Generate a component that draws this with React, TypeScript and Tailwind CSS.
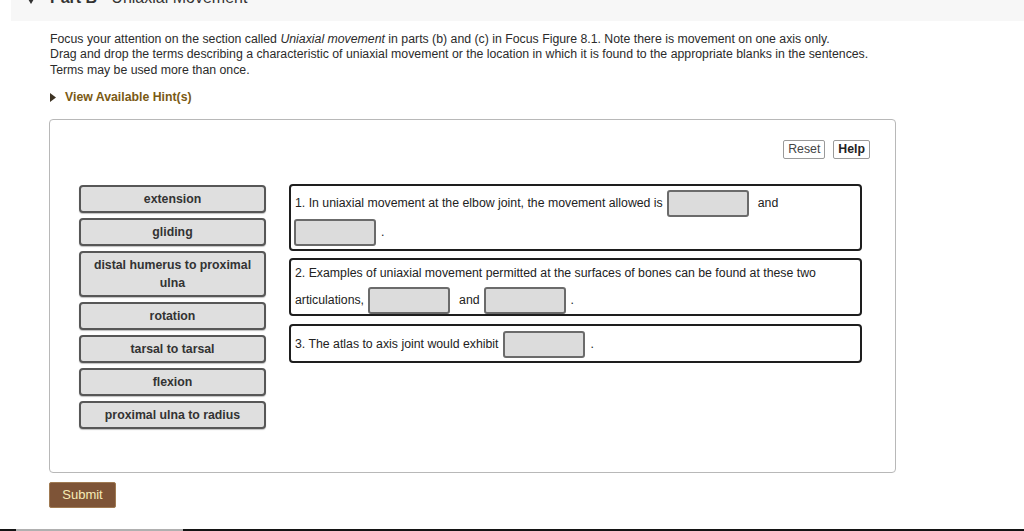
import React from "react";

const terms = [
  "extension",
  "gliding",
  "distal humerus to proximal ulna",
  "rotation",
  "tarsal to tarsal",
  "flexion",
  "proximal ulna to radius",
];

function Blank({ className = "" }: { className?: string }) {
  return (
    <span
      className={
        "inline-block h-[27px] w-[82px] shrink-0 rounded-[3px] border-2 border-[#6b6b6b] bg-[#dcdcdc] " +
        className
      }
    />
  );
}

export default function App() {
  return (
    <div className="flex h-[531px] w-[1024px] flex-col overflow-hidden bg-white font-['Liberation_Sans',Arial,sans-serif] text-[#2b2b2b]">
      {/* header strip */}
      <div className="ml-[11px] h-[21px] shrink-0 overflow-hidden bg-[#f7f7f7]">
        <div className="mt-[-12px] flex h-[20px] items-center pl-[17px]">
          <svg width="6" height="5" viewBox="0 0 6 5" className="mt-[7px]">
            <polygon points="0,0 6,0 3,5" fill="#333" />
          </svg>
          <span className="ml-[16px] text-[16px] leading-[20px] text-[#333]">
            <b>Part B - </b>Uniaxial Movement
          </span>
        </div>
      </div>

      {/* instructions */}
      <div className="ml-[50px] mt-[11px] text-[12.3px] leading-[15.3px] text-[#2b2b2b]">
        <p>
          Focus your attention on the section called <i>Uniaxial movement</i> in parts (b) and (c) in Focus Figure 8.1. Note
          there is movement on one axis only.
        </p>
        <p>
          Drag and drop the terms describing a characteristic of uniaxial movement or the location in which it is found to the
          appropriate blanks in the sentences.
        </p>
        <p>Terms may be used more than once.</p>
      </div>

      {/* hint */}
      <div className="ml-[50px] mt-[12px] flex h-[15px] items-center">
        <svg width="6" height="9" viewBox="0 0 6 9">
          <polygon points="0,0 6,4.5 0,9" fill="#3e3424" />
        </svg>
        <span className="ml-[9px] text-[12.3px] font-bold leading-[15px] text-[#7a5a14]">View Available Hint(s)</span>
      </div>

      {/* main box */}
      <div className="ml-[49px] mt-[14px] flex h-[354px] w-[847px] shrink-0 flex-col rounded-[4px] border border-[#b8b8b8] pl-[29px] pr-[25px] pt-[20px]">
        <div className="flex justify-end gap-[8px]">
          <button className="h-[19px] rounded-[2px] border border-[#9a9a9a] bg-white px-[4px] text-[12.3px] leading-[17px] text-[#444]">
            Reset
          </button>
          <button className="h-[19px] rounded-[2px] border border-[#9a9a9a] bg-white px-[4px] text-[12.3px] font-bold leading-[17px] text-[#222]">
            Help
          </button>
        </div>

        <div className="mt-[25px] flex items-start gap-[23px]">
          {/* terms */}
          <div className="mt-[1px] flex w-[187px] flex-col gap-[5px]">
            {terms.map((t) => (
              <div
                key={t}
                className="rounded-[4px] border-2 border-[#575757] bg-[#dfdfdf] px-[6px] py-[3px] text-center text-[12.3px] font-bold leading-[18px] text-[#333] shadow-[0_1px_1px_rgba(0,0,0,0.25)]"
              >
                {t}
              </div>
            ))}
          </div>

          {/* sentences */}
          <div className="flex w-[573px] flex-col text-[12.3px] text-[#222]">
            <div className="h-[67px] rounded-[4px] border-2 border-[#1e1e1e] px-[3px] pt-[4px]">
              <div className="flex h-[27px] items-center">
                <span className="ml-[1px]">1. In uniaxial movement at the elbow joint, the movement allowed is</span>
                <Blank className="ml-[4px]" />
                <span className="ml-[9px]">and</span>
              </div>
              <div className="mt-[2px] flex h-[27px] items-center">
                <Blank />
                <span className="ml-[5px]">.</span>
              </div>
            </div>

            <div className="mt-[7px] h-[58px] rounded-[4px] border-2 border-[#1e1e1e] px-[3px] pt-[4px]">
              <div className="flex h-[18px] items-center">
                <span className="ml-[1px]">
                  2. Examples of uniaxial movement permitted at the surfaces of bones can be found at these two
                </span>
              </div>
              <div className="mt-[5px] flex h-[27px] items-center">
                <span className="ml-[1px]">articulations,</span>
                <Blank className="ml-[4px]" />
                <span className="ml-[9px]">and</span>
                <Blank className="ml-[4px]" />
                <span className="ml-[5px]">.</span>
              </div>
            </div>

            <div className="mt-[8px] h-[39px] rounded-[4px] border-2 border-[#1e1e1e] px-[3px] pt-[5px]">
              <div className="flex h-[27px] items-center">
                <span className="ml-[1px]">3. The atlas to axis joint would exhibit</span>
                <Blank className="ml-[5px]" />
                <span className="ml-[5px]">.</span>
              </div>
            </div>
          </div>
        </div>
      </div>

      {/* submit */}
      <button className="ml-[49px] mt-[9px] h-[26px] w-[67px] shrink-0 rounded-[2px] border border-[#a07a52] bg-[#7e5437] text-[13px] leading-[24px] text-[#f7ecb5]">
        Submit
      </button>

      {/* bottom bar */}
      <div className="mt-auto flex h-[2px] w-full shrink-0 bg-[#141414]">
        <div className="ml-[16px] h-full w-[167px] bg-[#b0b0b0]" />
      </div>
    </div>
  );
}
